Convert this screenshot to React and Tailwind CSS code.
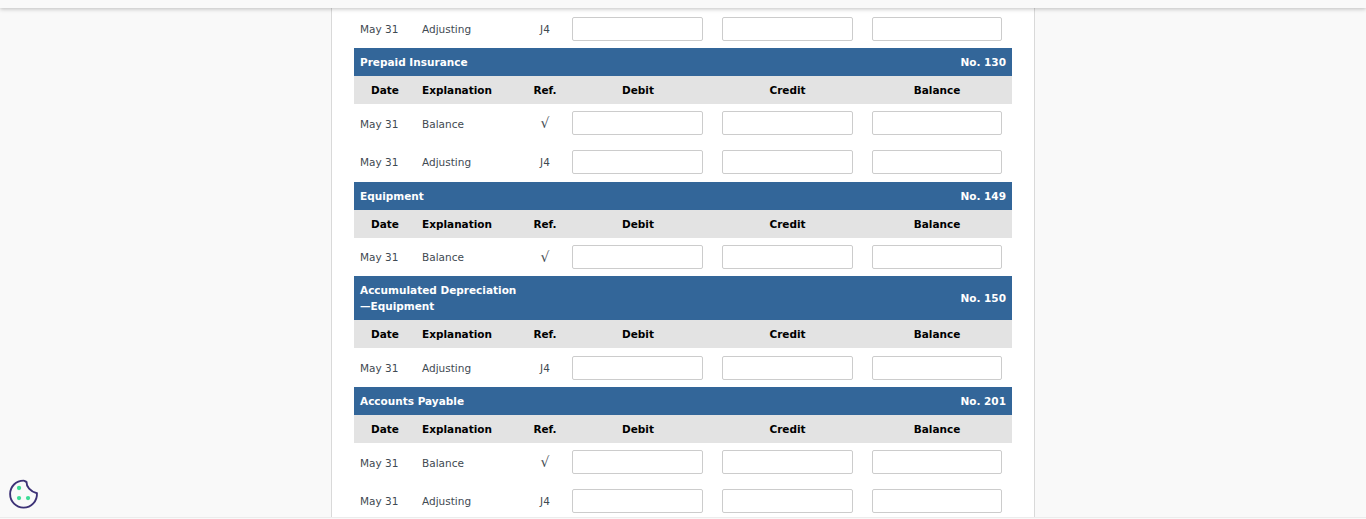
import React from 'react';

const accounts = [
  { name: 'Prepaid Insurance', no: 'No. 130', rows: [['Balance', '√'], ['Adjusting', 'J4']] },
  { name: 'Equipment', no: 'No. 149', rows: [['Balance', '√']] },
  { name: 'Accumulated Depreciation —Equipment', no: 'No. 150', rows: [['Adjusting', 'J4']] },
  { name: 'Accounts Payable', no: 'No. 201', rows: [['Balance', '√'], ['Adjusting', 'J4']] },
];

function AmountCell({ width = 'w-[131px]' }) {
  return (
    <td className="p-0 text-center align-middle">
      <input type="text" className={`mx-auto block h-6 rounded-[2px] border border-[#cccccc] bg-white ${width}`} />
    </td>
  );
}

function EntryRow({ explanation, ref_ }) {
  return (
    <tr className="text-[#3f4a52]">
      <td className="h-[38.75px] p-0 pl-[6px] pt-[2px] align-middle">May 31</td>
      <td className="p-0 pl-[6px] pt-[2px] align-middle">{explanation}</td>
      <td className="p-0 pt-[2px] text-center align-middle">
        {ref_ === '√' ? <span className="text-[14px] leading-none">{ref_}</span> : ref_}
      </td>
      <AmountCell />
      <AmountCell />
      <AmountCell width="w-[130px]" />
    </tr>
  );
}

function Account({ account }) {
  return (
    <>
      <tr className="bg-[#336699] font-bold text-white">
        <td colSpan={3} className="p-0 px-[6px] py-[6px] align-middle leading-4">
          <div className="w-[166px]">{account.name}</div>
        </td>
        <td colSpan={3} className="p-0 pr-[6px] pt-[2px] text-right align-middle">{account.no}</td>
      </tr>
      <tr className="bg-[#e3e3e3] font-bold text-black">
        <td className="h-7 p-0 pt-[2px] text-center align-middle">Date</td>
        <td className="p-0 pl-[6px] pt-[2px] align-middle">Explanation</td>
        <td className="p-0 pt-[2px] text-center align-middle">Ref.</td>
        <td className="p-0 pl-[2px] pt-[2px] text-center align-middle">Debit</td>
        <td className="p-0 pl-[1px] pt-[2px] text-center align-middle">Credit</td>
        <td className="p-0 pt-[2px] text-center align-middle">Balance</td>
      </tr>
      {account.rows.map((row, i) => (
        <EntryRow key={i} explanation={row[0]} ref_={row[1]} />
      ))}
    </>
  );
}

export default function App() {
  return (
    <div className="relative h-[519px] overflow-hidden bg-[#f9f9f9] font-['DejaVu_Sans',sans-serif] text-[10.5px]">
      <div className="absolute inset-x-0 top-0 z-10 h-2 bg-[#f9f9f9] shadow-[0_1px_4px_rgba(0,0,0,0.25)]" />

      <main className="mx-auto h-full w-[704px] border-x border-[#d9d9d9] bg-white pl-[22px] pt-[9.25px]">
        <table className="w-[658px] table-fixed border-collapse">
          <colgroup>
            <col className="w-[62px]" />
            <col className="w-[112px]" />
            <col className="w-[34px]" />
            <col className="w-[150px]" />
            <col className="w-[150px]" />
            <col className="w-[150px]" />
          </colgroup>
          <tbody>
            <EntryRow explanation="Adjusting" ref_="J4" />
            {accounts.map((account) => (
              <Account key={account.no} account={account} />
            ))}
          </tbody>
        </table>
      </main>

      <div className="absolute inset-x-0 bottom-0 z-10 h-[2px] border-t border-[#ececec] bg-[#f9f9f9]" />

      <button className="absolute bottom-[10px] left-[9px] z-10 h-[30px] w-[30px]" aria-label="Cookie settings">
        <svg viewBox="0 0 32 32" className="h-full w-full" fill="none">
          <path
            d="M18.7 3.2C18.5 8 22.500 13.500 29.800 15.200C30.300 23.500 23.800 30.500 15.500 30.500C7.500 30.500 1.200 24 1.200 16C1.200 8 7.500 1.700 15.500 1.700C16.600 1.700 17.700 2.800 18.700 3.200Z"
            stroke="#3c3176"
            strokeWidth="2"
          />
          <circle cx="10.700" cy="9.600" r="2.300" fill="#3ddc97" />
          <circle cx="10.700" cy="20.300" r="2.300" fill="#3ddc97" />
          <circle cx="20.300" cy="20.300" r="2.300" fill="#3ddc97" />
        </svg>
      </button>
    </div>
  );
}
